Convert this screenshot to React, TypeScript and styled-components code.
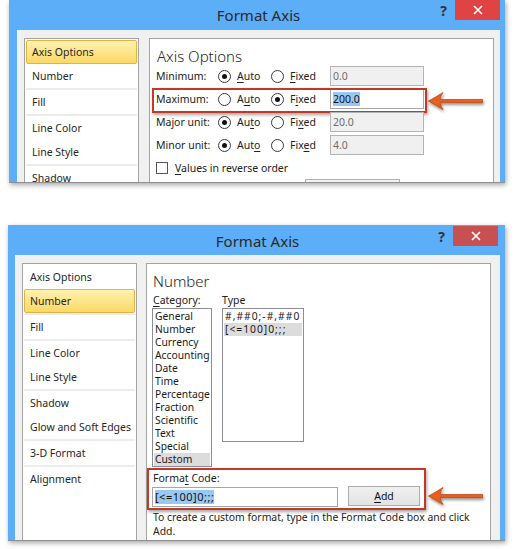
import React from 'react';
import styled, { createGlobalStyle, css } from 'styled-components';

const FONT = `"Noto Sans", "Open Sans", "Liberation Sans", sans-serif`;

const Global = createGlobalStyle`
  html, body { margin: 0; padding: 0; background: #ffffff; }
  body { width: 515px; height: 549px; overflow: hidden; font-family: ${FONT}; color: #222; }
  * { box-sizing: border-box; }
`;

const Page = styled.div`
  width: 515px;
  height: 549px;
  display: flex;
  flex-direction: column;
`;

const Window = styled.div<{ $ml: number; $mt: number; $h: number; $fl: number }>`
  flex: none;
  margin: ${p => p.$mt}px 0 0 ${p => p.$ml}px;
  width: ${p => 505 - p.$ml}px;
  height: ${p => p.$h}px;
  display: flex;
  flex-direction: column;
  background: #5caef8;
  padding: 0 5px 0 ${p => p.$fl}px;
  border-bottom: 1px solid #8f8f8f;
  box-shadow: 1px 2px 5px rgba(0, 0, 0, 0.35);
  overflow: hidden;
`;

const TitleBar = styled.div`
  flex: none;
  height: 30px;
  display: grid;
  grid-template-columns: 1fr auto 1fr;
  align-items: center;
`;

const Title = styled.div<{ $dy: number }>`
  grid-column: 2;
  font-size: 15px;
  line-height: 20px;
  color: #2a2a2a;
  transform: translateY(${p => p.$dy}px);
`;

const Controls = styled.div<{ $mr: number; $mt: number }>`
  grid-column: 3;
  justify-self: end;
  align-self: start;
  display: flex;
  align-items: flex-start;
  gap: 8px;
  margin: ${p => p.$mt}px ${p => p.$mr}px 0 0;
`;

const HelpGlyph = styled.span`
  font-size: 14px;
  font-weight: 700;
  line-height: 22px;
  color: #333;
`;

const CloseBtn = styled.div<{ $active: boolean }>`
  width: 45px;
  height: 20px;
  background: ${p => (p.$active ? '#e04343' : '#c75050')};
  display: flex;
  align-items: center;
  justify-content: center;
`;

const Body = styled.div<{ $pr: number; $gap: number }>`
  flex: 1;
  min-height: 0;
  background: #f0f0f0;
  display: flex;
  align-items: stretch;
  gap: ${p => p.$gap}px;
  padding: 8px ${p => p.$pr}px 0 7px;
`;

const NavPanel = styled.div`
  flex: none;
  width: 115px;
  background: #fff;
  border: 1px solid #a3a3a3;
  border-bottom: none;
  padding: 1px;
  display: flex;
  flex-direction: column;
`;

const NavItem = styled.div<{ $selected?: boolean }>`
  flex: none;
  height: 24px;
  display: flex;
  align-items: center;
  padding-left: 5px;
  font-size: 10.5px;
  color: #262626;
  border: 1px solid transparent;
  border-radius: 2px;
  white-space: nowrap;
  ${p =>
    p.$selected &&
    css`
      background: linear-gradient(#fff2b0, #fcd865);
      border-color: #e2b445;
    `}
`;

const NavSep = styled.div`
  flex: none;
  height: 2px;
  background: #ededed;
`;

const ContentPanel = styled.div<{ $pl: number }>`
  flex: none;
  width: 345px;
  background: #fff;
  border: 1px solid #a3a3a3;
  border-bottom: none;
  padding: 7px 6px 0 ${p => p.$pl}px;
  display: flex;
  flex-direction: column;
`;

const Heading = styled.div<{ $pad?: number }>`
  font-size: 15px;
  line-height: 20px;
  font-weight: 300;
  color: #262626;
  padding-left: ${p => p.$pad ?? 1}px;
`;

const Fields = styled.div`
  display: flex;
  flex-direction: column;
  align-items: flex-start;
  gap: 3px;
`;

const markBox = css`
  &::after {
    content: '';
    position: absolute;
    border: 2px solid #c23a26;
    box-shadow: 1px 2px 3px rgba(0, 0, 0, 0.35);
    pointer-events: none;
  }
`;

const OptionRow = styled.div<{ $marked?: boolean }>`
  position: relative;
  width: 268px;
  height: 20px;
  display: grid;
  grid-template-columns: 62px 53px 59px 94px;
  align-items: center;
  font-size: 10.5px;
  color: #222;
  ${p =>
    p.$marked &&
    css`
      ${markBox}
      &::after {
        top: -1px;
        bottom: -4px;
        left: -4px;
        right: -3px;
      }
    `}
`;

const Label = styled.span`
  white-space: nowrap;
`;

const RadioOption = styled.label`
  display: flex;
  align-items: center;
  gap: 6px;
  white-space: nowrap;
`;

const Radio = styled.span<{ $on?: boolean }>`
  flex: none;
  width: 13px;
  height: 13px;
  border-radius: 50%;
  border: 1px solid #3a3a3a;
  background: #fff;
  display: flex;
  align-items: center;
  justify-content: center;
  &::before {
    content: '';
    width: 5px;
    height: 5px;
    border-radius: 50%;
    background: ${p => (p.$on ? '#111' : 'transparent')};
  }
`;

const U = styled.span`
  text-decoration: underline;
  text-underline-offset: 2px;
  text-decoration-thickness: 1px;
`;

const TextBox = styled.div<{ $disabled?: boolean; $w?: number; $wide?: boolean }>`
  flex: none;
  width: ${p => (p.$w ? `${p.$w}px` : 'auto')};
  height: 20px;
  border: 1px solid ${p => (p.$disabled ? '#b4b4b4' : '#a6a6a6')};
  background: ${p => (p.$disabled ? '#f0f0f0' : '#fff')};
  color: ${p => (p.$disabled ? '#6d6d6d' : '#111')};
  padding: 0 2px;
  display: flex;
  align-items: center;
  font-size: ${p => (p.$wide ? '11px' : '10.5px')};
  letter-spacing: ${p => (p.$wide ? '0.5px' : '0')};
  white-space: nowrap;
`;

const Selected = styled.span`
  background: #99c9f2;
  color: #111;
  line-height: 14px;
`;

const CheckRow = styled.label`
  height: 20px;
  display: flex;
  align-items: center;
  gap: 7px;
  font-size: 10.5px;
  color: #222;
`;

const CheckBox = styled.span`
  flex: none;
  width: 12px;
  height: 12px;
  border: 1px solid #555;
  background: #fff;
`;

const PeekRow = styled.div`
  height: 20px;
  margin-top: -2px;
  padding-left: 149px;
`;

const PeekBox = styled.div`
  width: 95px;
  height: 20px;
  border: 1px solid #b0b0b0;
  background: #f2f2f2;
`;

const ArrowWrap = styled.div<{ $dy: number; $dx: number }>`
  position: absolute;
  left: calc(100% + ${p => p.$dx}px);
  top: calc(50% + ${p => p.$dy}px);
  width: 56px;
  height: 22px;
  filter: drop-shadow(1px 2px 1.5px rgba(0, 0, 0, 0.45));
  pointer-events: none;
`;

const ListHeads = styled.div`
  display: grid;
  grid-template-columns: 60px 82px;
  column-gap: 10px;
  margin-top: 1px;
  font-size: 10.5px;
  line-height: 16px;
  color: #222;
`;

const ListHead = styled.span<{ $pad?: number }>`
  padding-left: ${p => p.$pad ?? 0}px;
`;

const Lists = styled.div`
  display: grid;
  grid-template-columns: 60px 82px;
  column-gap: 10px;
  align-items: start;
`;

const ListBox = styled.div<{ $h: number; $spaced?: boolean }>`
  height: ${p => p.$h}px;
  border: 1px solid #8a8d93;
  background: #fff;
  padding: 1px 1px 0;
  overflow: hidden;
  letter-spacing: ${p => (p.$spaced ? '1px' : '0')};
`;

const ListItem = styled.div<{ $selected?: boolean }>`
  height: 13px;
  line-height: 13px;
  padding-left: 1px;
  font-size: 10.3px;
  color: #1a1a1a;
  white-space: nowrap;
  background: ${p => (p.$selected ? '#dcdcdc' : 'transparent')};
`;

const FormatGroup = styled.div`
  position: relative;
  align-self: flex-start;
  margin-top: 3px;
  display: flex;
  flex-direction: column;
  ${markBox}
  &::after {
    top: -2px;
    bottom: -3px;
    left: -5px;
    right: -6px;
  }
`;

const GroupLabel = styled.div`
  font-size: 10.5px;
  line-height: 16px;
  padding-left: 1px;
  color: #222;
`;

const InputRow = styled.div`
  position: relative;
  margin-top: 1px;
  height: 20px;
  display: flex;
  gap: 10px;
`;

const Button = styled.div`
  flex: none;
  width: 72px;
  height: 20px;
  margin-top: -1px;
  border: 1px solid #acacac;
  background: linear-gradient(#f0f0f0, #e3e3e3);
  display: flex;
  align-items: center;
  justify-content: center;
  font-size: 10.5px;
  color: #111;
`;

const HelpText = styled.p`
  margin: 3px 0 0;
  padding-left: 1px;
  font-size: 10.4px;
  line-height: 14px;
  color: #222;
`;

const Arrow: React.FC<{ dy: number; dx: number }> = ({ dy, dx }) => (
  <ArrowWrap $dy={dy} $dx={dx}>
    <svg width="56" height="22" viewBox="0 0 56 22">
      <path
        d="M0.5 11 Q8 7 15 2.5 Q11.5 7.5 12.5 9.6 L54.5 9.4 L54.5 12.6 L12.5 12.4 Q11.5 14.5 15 19.5 Q8 15 0.5 11 Z"
        fill="#e8601e"
        stroke="#c14a12"
        strokeWidth="0.8"
        strokeLinejoin="round"
      />
    </svg>
  </ArrowWrap>
);

const CloseIcon = () => (
  <svg width="10" height="10" viewBox="0 0 10 10">
    <path d="M1 1 L9 9 M9 1 L1 9" stroke="#fff" strokeWidth="1.6" />
  </svg>
);

const TitleBarView: React.FC<{ active: boolean; mr: number; mt: number; dy: number }> = ({ active, mr, mt, dy }) => (
  <TitleBar>
    <Title $dy={dy}>Format Axis</Title>
    <Controls $mr={mr} $mt={mt}>
      <HelpGlyph>?</HelpGlyph>
      <CloseBtn $active={active}>
        <CloseIcon />
      </CloseBtn>
    </Controls>
  </TitleBar>
);

type NavEntry = string | null;
const NAV: NavEntry[] = [
  'Axis Options',
  'Number',
  null,
  'Fill',
  null,
  'Line Color',
  'Line Style',
  null,
  'Shadow',
  'Glow and Soft Edges',
  null,
  '3-D Format',
  null,
  'Alignment',
];

const Nav: React.FC<{ selected: string; count: number }> = ({ selected, count }) => (
  <NavPanel>
    {NAV.slice(0, count).map((n, i) =>
      n === null ? <NavSep key={i} /> : <NavItem key={i} $selected={n === selected}>{n}</NavItem>
    )}
  </NavPanel>
);

const Acc: React.FC<{ text: string; idx: number }> = ({ text, idx }) => (
  <>
    {text.slice(0, idx)}
    <U>{text[idx]}</U>
    {text.slice(idx + 1)}
  </>
);

const ROWS = [
  { label: 'Minimum:', auto: true, value: '0.0', acc: 0 },
  { label: 'Maximum:', auto: false, value: '200.0', acc: 1 },
  { label: 'Major unit:', auto: true, value: '20.0', acc: 2 },
  { label: 'Minor unit:', auto: true, value: '4.0', acc: 3 },
];

const CATEGORIES = [
  'General',
  'Number',
  'Currency',
  'Accounting',
  'Date',
  'Time',
  'Percentage',
  'Fraction',
  'Scientific',
  'Text',
  'Special',
  'Custom',
];

export default function App() {
  return (
    <Page>
      <Global />
      <Window $ml={9} $mt={0} $h={183} $fl={8}>
        <TitleBarView active mr={0} mt={0} dy={0} />
        <Body $pr={6} $gap={10}>
          <Nav selected="Axis Options" count={9} />
          <ContentPanel $pl={6}>
            <Heading>Axis Options</Heading>
            <Fields>
              {ROWS.map(r => (
                <OptionRow key={r.label} $marked={!r.auto}>
                  <Label>{r.label}</Label>
                  <RadioOption>
                    <Radio $on={r.auto} />
                    <span>
                      <Acc text="Auto" idx={r.acc} />
                    </span>
                  </RadioOption>
                  <RadioOption>
                    <Radio $on={!r.auto} />
                    <span>
                      <Acc text="Fixed" idx={r.acc} />
                    </span>
                  </RadioOption>
                  <TextBox $disabled={r.auto}>
                    {r.auto ? r.value : <Selected>{r.value}</Selected>}
                  </TextBox>
                  {!r.auto && <Arrow dy={-9} dx={4} />}
                </OptionRow>
              ))}
              <CheckRow>
                <CheckBox />
                <span>
                  <U>V</U>alues in reverse order
                </span>
              </CheckRow>
              <PeekRow>
                <PeekBox />
              </PeekRow>
            </Fields>
          </ContentPanel>
        </Body>
      </Window>

      <Window $ml={8} $mt={42} $h={316} $fl={7}>
        <TitleBarView active={false} mr={2} mt={1} dy={1} />
        <Body $pr={9} $gap={9}>
          <Nav selected="Number" count={NAV.length} />
          <ContentPanel $pl={5}>
            <Heading>Number</Heading>
            <ListHeads>
              <ListHead $pad={1}>
                <U>C</U>ategory:
              </ListHead>
              <ListHead>Type</ListHead>
            </ListHeads>
            <Lists>
              <ListBox $h={159}>
                {CATEGORIES.map(c => (
                  <ListItem key={c} $selected={c === 'Custom'}>
                    {c}
                  </ListItem>
                ))}
              </ListBox>
              <ListBox $h={134} $spaced>
                <ListItem>#,##0;-#,##0</ListItem>
                <ListItem $selected>[&lt;=100]0;;;</ListItem>
              </ListBox>
            </Lists>
            <FormatGroup>
              <GroupLabel>
                Forma<U>t</U> Code:
              </GroupLabel>
              <InputRow>
                <TextBox $w={186} $wide>
                  <Selected>[&lt;=100]0;;;</Selected>
                </TextBox>
                <Button>
                  <span>
                    <U>A</U>dd
                  </span>
                </Button>
                <Arrow dy={-12} dx={8} />
              </InputRow>
            </FormatGroup>
            <HelpText>
              To create a custom format, type in the Format Code box and click
              <br />
              Add.
            </HelpText>
          </ContentPanel>
        </Body>
      </Window>
    </Page>
  );
}
